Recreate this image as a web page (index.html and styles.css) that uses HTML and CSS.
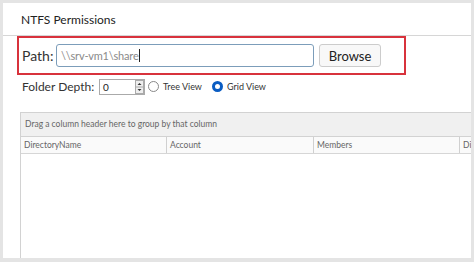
FILE: index.html
```html
<!DOCTYPE html>
<html lang="en">
<head>
    <meta charset="UTF-8">
    <title>NTFS Permissions</title>
    <link rel="stylesheet" href="styles.css">
</head>
<body>
    <div class="panel">
        <h1 class="title">NTFS Permissions</h1>

        <div class="path-box">
            <label class="path-label">Path:</label>
            <div class="path-input">\\srv-vm1\share<span class="caret"></span></div>
            <button class="browse">Browse</button>
        </div>

        <div class="options">
            <span class="depth-label">Folder Depth:</span>
            <div class="spinner">
                <span class="spin-value">0</span>
                <span class="spin-btns">
                    <svg width="9" height="14" viewBox="0 0 9 14">
                        <rect x="0.5" y="0.5" width="8" height="13" fill="#eee" stroke="#aaa"/>
                        <line x1="0.5" y1="7" x2="8.5" y2="7" stroke="#aaa"/>
                        <path d="M2.5 5 L4.5 3 L6.5 5 Z" fill="#333"/>
                        <path d="M2.5 9 L4.5 11 L6.5 9 Z" fill="#333"/>
                    </svg>
                </span>
            </div>
            <span class="radio"></span><span class="radio-label">Tree View</span>
            <span class="radio checked"></span><span class="radio-label">Grid View</span>
        </div>

        <div class="grid">
            <div class="group-panel">Drag a column header here to group by that column</div>
            <div class="grid-header">
                <div class="col">DirectoryName</div>
                <div class="col wide">Account</div>
                <div class="col">Members</div>
                <div class="col">DirectoryPath</div>
            </div>
            <div class="grid-body"></div>
        </div>
    </div>
</body>
</html>
```

FILE: styles.css
```css
html{
    box-sizing: border-box;
    font-family: Lato, "Open Sans", sans-serif;
}

*,
*:after,
*:before{
    box-sizing: inherit;
}

body{
    margin: 0;
    padding: 3px 3px 4px 3px;
    background-color: #e4e4e4;
    height: 262px;
    overflow: hidden;
}

.panel{
    background-color: #fff;
    height: 255px;
    overflow: hidden;
}

.title{
    margin: 0;
    height: 33px;
    padding: 9px 0 0 18px;
    font-size: 12px;
    font-weight: normal;
    color: #222;
    border-bottom: 1px solid #d6d6d6;
}

.path-box{
    margin-left: 14px;
    width: 389px;
    height: 39px;
    border: 2px solid #d8323c;
    display: flex;
    align-items: center;
    padding-left: 3px;
}

.path-label{
    font-size: 14px;
    color: #333;
    width: 34px;
    flex-shrink: 0;
}

.path-input{
    width: 258px;
    height: 23px;
    flex-shrink: 0;
    border: 1px solid #7c9dba;
    border-radius: 3px;
    padding: 0 4px;
    font-size: 11px;
    letter-spacing: -0.2px;
    line-height: 21px;
    color: #8a8a8a;
    display: flex;
    align-items: center;
}

.caret{
    display: inline-block;
    width: 1px;
    height: 13px;
    background-color: #222;
}

.browse{
    margin-left: 5px;
    width: 62px;
    height: 23px;
    flex-shrink: 0;
    border: 1px solid #ccc;
    border-radius: 3px;
    background-color: #f8f8f8;
    font-family: inherit;
    font-size: 13px;
    color: #222;
    padding: 0;
}

.options{
    display: flex;
    align-items: center;
    margin: 3px 0 0 19px;
    height: 17px;
    white-space: nowrap;
}

.options > *{
    flex-shrink: 0;
}

.depth-label{
    font-size: 12px;
    color: #333;
    width: 77px;
}

.spinner{
    width: 46px;
    height: 16px;
    border: 1px solid #aaa;
    display: flex;
    align-items: center;
    justify-content: space-between;
    padding-left: 3px;
}

.spin-value{
    font-size: 10px;
    color: #222;
}

.spin-btns{
    display: flex;
}

.radio{
    width: 11px;
    height: 11px;
    border: 1px solid #888;
    border-radius: 50%;
    margin-left: 3px;
    margin-right: 4px;
}

.radio.checked{
    border: 3px solid #0a5cc2;
    margin-left: 10px;
}

.radio-label{
    font-size: 9px;
    color: #333;
}

.grid{
    margin: 17px 0 0 17px;
    width: 540px;
    border: 1px solid #d2d2d2;
    border-bottom: none;
    height: 150px;
}

.group-panel{
    height: 24px;
    background-color: #f0f0f0;
    border-bottom: 1px solid #d2d2d2;
    padding-left: 4px;
    font-size: 8.5px;
    line-height: 23px;
    color: #666;
}

.grid-header{
    display: flex;
    height: 17px;
    background-color: #fafafa;
    border-bottom: 1px solid #d6d6d6;
}

.col{
    width: 146px;
    flex-shrink: 0;
    padding-left: 3px;
    border-right: 1px solid #d0d0d0;
    font-size: 8.5px;
    line-height: 16px;
    color: #666;
    white-space: nowrap;
    overflow: hidden;
}

.col.wide{
    width: 147px;
}
```
